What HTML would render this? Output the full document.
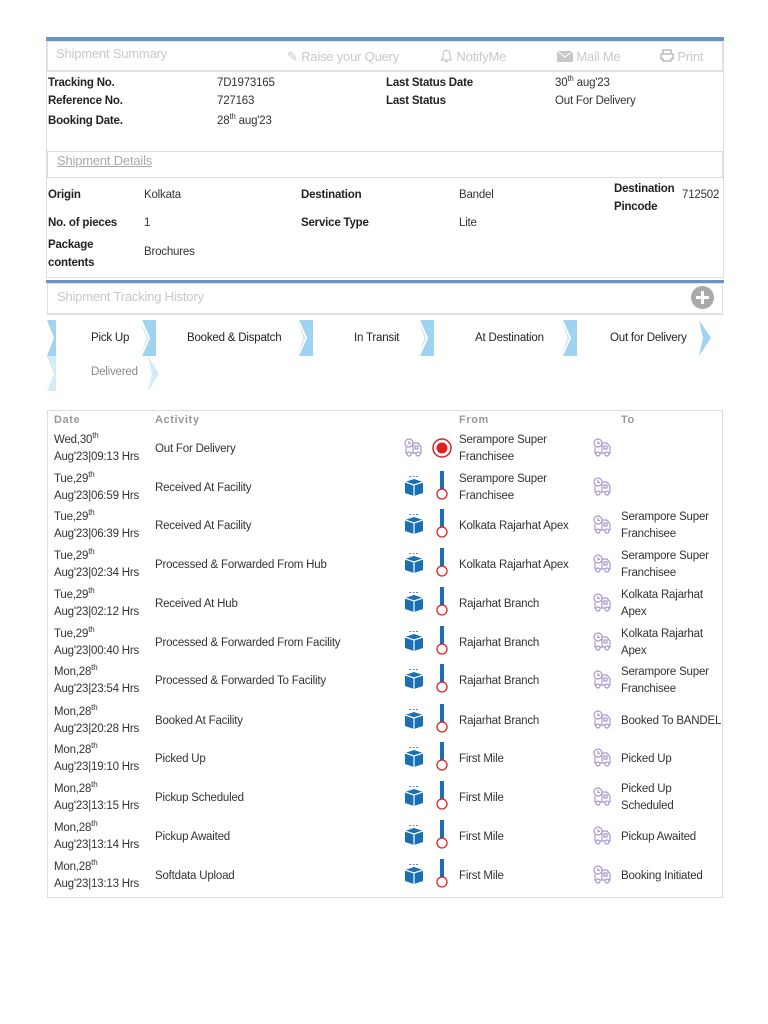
<!DOCTYPE html>
<html><head><meta charset="utf-8"><style>
*{margin:0;padding:0;box-sizing:border-box}
body{width:768px;height:1024px;background:#fff;font-family:"Liberation Sans",sans-serif;font-size:11.5px;line-height:17px;color:#333;position:relative;overflow:hidden;letter-spacing:-0.2px}
.a{position:absolute;white-space:nowrap}
.b{font-weight:bold;color:#222}
.lt{color:#c8c8c8;font-size:13px}
.box{position:absolute;border:1px solid #ddd}
.row{position:absolute;left:47px;width:676px;height:38px}
.row .d{position:absolute;left:7px;top:2px;line-height:17px}
.row .t{position:absolute;top:0;height:38px;line-height:38px}
.row .t2{position:absolute;top:2px;line-height:17px}
sup{font-size:8px;line-height:0}
.ic{position:absolute;top:10px}
</style></head><body>
<!-- summary -->
<div class="box" style="left:46px;top:37px;width:678px;height:241px"></div>
<div class="a" style="left:46px;top:37px;width:678px;height:4px;background:#6b95c8"></div>
<div class="box" style="left:47px;top:41px;width:676px;height:31px;border-color:#e3e3e3;border-bottom:2px solid #e0e0e0"></div>
<div class="a lt" style="left:56px;top:45px">Shipment Summary</div>
<div class="a lt" style="left:287px;top:48px">✎ Raise your Query</div>
<div class="a lt" style="left:440px;top:48px"><svg width="13" height="14" viewBox="0 0 13 14" style="vertical-align:-2px"><path d="M6.5 1.5c-2.2 0-3.5 1.6-3.5 3.8v3.4L1.5 11h10L10 8.7V5.3C10 3.1 8.7 1.5 6.5 1.5zM5 12.5h3" fill="none" stroke="#bbb"/></svg> NotifyMe</div>
<div class="a lt" style="left:557px;top:48px"><svg width="16" height="12" viewBox="0 0 16 12" style="vertical-align:-1px"><rect x="0" y="1" width="16" height="11" fill="#c8c8c8"/><path d="M0 1l8 6 8-6" stroke="#fff" fill="none"/></svg> Mail Me</div>
<div class="a lt" style="left:660px;top:48px"><svg width="14" height="13" viewBox="0 0 14 13" style="vertical-align:-1px"><path d="M3 5V1h8v4M1 5h12v5h-2v2H3v-2H1z" fill="none" stroke="#bbb" stroke-width="1.5"/></svg> Print</div>
<div class="a b" style="left:48px;top:75px">Tracking No.</div>
<div class="a" style="left:217px;top:75px">7D1973165</div>
<div class="a b" style="left:386px;top:75px">Last Status Date</div>
<div class="a" style="left:555px;top:75px">30<sup>th</sup> aug'23</div>
<div class="a b" style="left:48px;top:93px">Reference No.</div>
<div class="a" style="left:217px;top:93px">727163</div>
<div class="a b" style="left:386px;top:93px">Last Status</div>
<div class="a" style="left:555px;top:93px">Out For Delivery</div>
<div class="a b" style="left:48px;top:113px">Booking Date.</div>
<div class="a" style="left:217px;top:113px">28<sup>th</sup> aug'23</div>
<div class="box" style="left:47px;top:151px;width:676px;height:27px"></div>
<div class="a lt" style="left:57px;top:152px;text-decoration:underline;color:#aaa">Shipment Details</div>
<div class="a b" style="left:48px;top:187px">Origin</div>
<div class="a" style="left:144px;top:187px">Kolkata</div>
<div class="a b" style="left:301px;top:187px">Destination</div>
<div class="a" style="left:459px;top:187px">Bandel</div>
<div class="a b" style="left:614px;top:180px;line-height:18px">Destination<br>Pincode</div>
<div class="a" style="left:682px;top:187px">712502</div>
<div class="a b" style="left:48px;top:215px">No. of pieces</div>
<div class="a" style="left:144px;top:215px">1</div>
<div class="a b" style="left:301px;top:215px">Service Type</div>
<div class="a" style="left:459px;top:215px">Lite</div>
<div class="a b" style="left:48px;top:236px;line-height:18px">Package<br>contents</div>
<div class="a" style="left:144px;top:244px">Brochures</div>
<!-- tracking history -->
<div class="a" style="left:46px;top:280px;width:678px;height:3px;background:#6b95c8"></div>
<div class="box" style="left:47px;top:283px;width:676px;height:32px;border-bottom:2px solid #e0e0e0"></div>
<div class="a lt" style="left:57px;top:288px">Shipment Tracking History</div>
<div class="a" style="left:691px;top:286px;width:23px;height:23px;border-radius:50%;background:#aaa"><div class="a" style="left:5px;top:10px;width:13px;height:3px;background:#fff"></div><div class="a" style="left:10px;top:5px;width:3px;height:13px;background:#fff"></div></div>
<svg class="a" style="left:40px;top:320px" width="680" height="72" viewBox="0 0 680 72">
<g fill="#9fd3f1">
<path d="M7 0h9v36l-9 0 7-18z"/>
<path d="M100 0h16v36h-16l7-18z"/>
<path d="M257 0h16v36h-16l7-18z"/>
<path d="M378 0h16v36h-16l7-18z"/>
<path d="M521 0h16v36h-16l7-18z"/>
<path d="M659 0l12 18-12 18l4-18z"/>
</g>
<g fill="none" stroke="#fff" stroke-width="2">
<path d="M101 0l8 18-8 18"/><path d="M258 0l8 18-8 18"/><path d="M379 0l8 18-8 18"/><path d="M522 0l8 18-8 18"/>
</g>
<g fill="#d2ebf8"><path d="M7 36h9v35H7l7-17z"/><path d="M108 36l11 18-11 17l4-17z"/></g>
</svg>
<div class="a" style="left:91px;top:330px;color:#222">Pick Up</div>
<div class="a" style="left:187px;top:330px;color:#222">Booked &amp; Dispatch</div>
<div class="a" style="left:354px;top:330px;color:#222">In Transit</div>
<div class="a" style="left:475px;top:330px;color:#222">At Destination</div>
<div class="a" style="left:610px;top:330px;color:#222">Out for Delivery</div>
<div class="a" style="left:91px;top:364px;color:#888">Delivered</div>
<!-- table -->
<div class="box" style="left:47px;top:410px;width:676px;height:488px"></div>
<div class="a" style="left:54px;top:412px;color:#999;font-weight:bold;font-size:11px;letter-spacing:0.6px">Date</div>
<div class="a" style="left:155px;top:412px;color:#999;font-weight:bold;font-size:11px;letter-spacing:0.6px">Activity</div>
<div class="a" style="left:459px;top:412px;color:#999;font-weight:bold;font-size:11px;letter-spacing:0.6px">From</div>
<div class="a" style="left:621px;top:412px;color:#999;font-weight:bold;font-size:11px;letter-spacing:0.6px">To</div>
<svg width="0" height="0" style="position:absolute"><defs>
<g id="tr"><g fill="none" stroke="#a898cf" stroke-width="1.2"><circle cx="5" cy="5" r="4"/><path d="M5 3v2.5h2"/><path d="M9 5h5l3 4v6H2v-6"/><path d="M9 5v10"/><circle cx="5" cy="16" r="2" fill="#fff"/><circle cx="14" cy="16" r="2" fill="#fff"/><path d="M11 8h3v3h-3z"/></g></g>
<g id="bx"><path d="M0 6l9-3 9 3v11l-9 3-9-3z" fill="#1a6fb5"/><path d="M9 9v11M0 6l9 3 9-3" stroke="#fff" stroke-width="1.2" fill="none"/><path d="M4 0h10" stroke="#1a6fb5" stroke-dasharray="2 1.5" stroke-width="1.5"/></g>
<g id="th"><rect x="8" y="0" width="4" height="19" fill="#1a6fb5"/><circle cx="10" cy="23" r="5" fill="#fff" stroke="#e02020" stroke-width="1.3"/></g>
</defs></svg>
<div id="rows"></div>
<script>
var R=[["Wed,30","Aug'23|09:13 Hrs","Out For Delivery","Serampore Super|Franchisee",""],
["Tue,29","Aug'23|06:59 Hrs","Received At Facility","Serampore Super|Franchisee",""],
["Tue,29","Aug'23|06:39 Hrs","Received At Facility","Kolkata Rajarhat Apex","Serampore Super|Franchisee"],
["Tue,29","Aug'23|02:34 Hrs","Processed &amp; Forwarded From Hub","Kolkata Rajarhat Apex","Serampore Super|Franchisee"],
["Tue,29","Aug'23|02:12 Hrs","Received At Hub","Rajarhat Branch","Kolkata Rajarhat|Apex"],
["Tue,29","Aug'23|00:40 Hrs","Processed &amp; Forwarded From Facility","Rajarhat Branch","Kolkata Rajarhat|Apex"],
["Mon,28","Aug'23|23:54 Hrs","Processed &amp; Forwarded To Facility","Rajarhat Branch","Serampore Super|Franchisee"],
["Mon,28","Aug'23|20:28 Hrs","Booked At Facility","Rajarhat Branch","Booked To BANDEL"],
["Mon,28","Aug'23|19:10 Hrs","Picked Up","First Mile","Picked Up"],
["Mon,28","Aug'23|13:15 Hrs","Pickup Scheduled","First Mile","Picked Up|Scheduled"],
["Mon,28","Aug'23|13:14 Hrs","Pickup Awaited","First Mile","Pickup Awaited"],
["Mon,28","Aug'23|13:13 Hrs","Softdata Upload","First Mile","Booking Initiated"]];
var C=[450,489,527,566,605,644,682,722,760,799,838,877],h="";
function tx(s,l){return s.indexOf("|")>=0?'<div class="t2" style="left:'+l+'px">'+s.replace("|","<br>")+'</div>':'<div class="t" style="left:'+l+'px">'+s+'</div>'}
for(var i=0;i<12;i++){var r=R[i];
h+='<div class="row" style="top:'+(C[i]-20)+'px"><div class="d">'+r[0]+'<sup>th</sup><br>'+r[1]+'</div>'+tx(r[2],108);
if(i==0){h+='<svg class="ic" style="left:357px;top:8px" width="20" height="20"><use href="#tr"/></svg><svg class="ic" style="left:384px;top:7px" width="22" height="22"><circle cx="11" cy="11" r="9" fill="none" stroke="#e02020" stroke-width="1.5"/><circle cx="11" cy="11" r="5.5" fill="#e02020"/></svg>';}
else{h+='<svg class="ic" style="left:358px;top:7px" width="20" height="21"><use href="#bx"/></svg><svg class="ic" style="left:385px;top:2px" width="20" height="30"><use href="#th"/></svg>';}
h+=tx(r[3],412)+'<svg class="ic" style="left:546px;top:8px" width="20" height="20"><use href="#tr"/></svg>';
if(r[4])h+=tx(r[4],574);
h+='</div>';}
document.getElementById("rows").innerHTML=h;
</script>
</body></html>
